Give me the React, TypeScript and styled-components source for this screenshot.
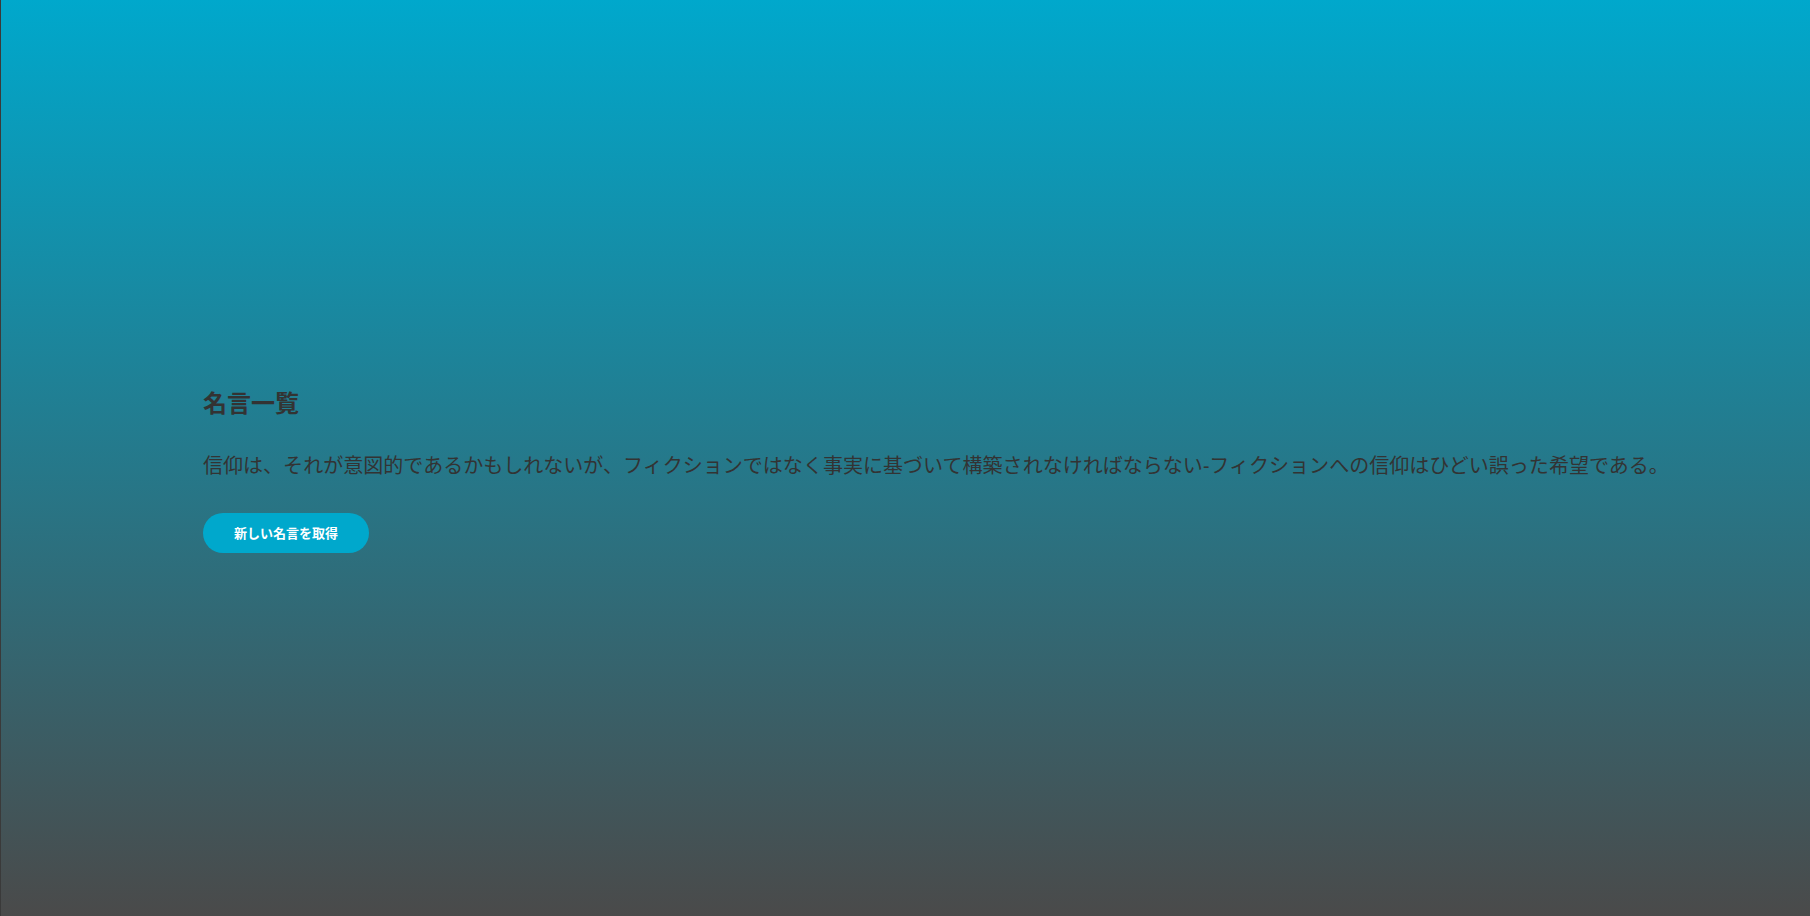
import styled, { createGlobalStyle } from 'styled-components'

const GlobalStyle = createGlobalStyle`
  html, body {
    margin: 0;
    padding: 0;
  }
  body {
    font-family: Meiryo, "Noto Sans", "Noto Sans CJK JP", sans-serif;
    color: #333;
  }
  * {
    box-sizing: border-box;
  }
`

const Page = styled.div`
  min-height: 100vh;
  display: flex;
  align-items: center;
  padding-top: 25px;
  border-left: 1px solid #3a3a3a;
  background: linear-gradient(to bottom, #00a8cc 0%, #4a4a4a 100%);
`

const Container = styled.div`
  width: 1405px;
  margin: 0 auto;
`

const Title = styled.h2`
  margin: 0;
  font-size: 24px;
  line-height: 28px;
  font-weight: 700;
  color: #333;
`

const Quote = styled.p`
  margin: 34px 0 32px;
  font-size: 20px;
  line-height: 30px;
  letter-spacing: 0.03px;
  color: #333;
  white-space: nowrap;
`

const Button = styled.button`
  display: inline-flex;
  align-items: center;
  justify-content: center;
  width: 166px;
  height: 40px;
  padding: 0;
  border: none;
  border-radius: 20px;
  background: #00a8cc;
  color: #fff;
  font-family: inherit;
  font-size: 13px;
  font-weight: 700;
  cursor: pointer;
`

const App = () => {
  return (
    <>
      <GlobalStyle />
      <Page>
        <Container>
          <Title>名言一覧</Title>
          <Quote>
            信仰は、それが意図的であるかもしれないが、フィクションではなく事実に基づいて構築されなければならない-フィクションへの信仰はひどい誤った希望である。
          </Quote>
          <Button>新しい名言を取得</Button>
        </Container>
      </Page>
    </>
  )
}

export default App
